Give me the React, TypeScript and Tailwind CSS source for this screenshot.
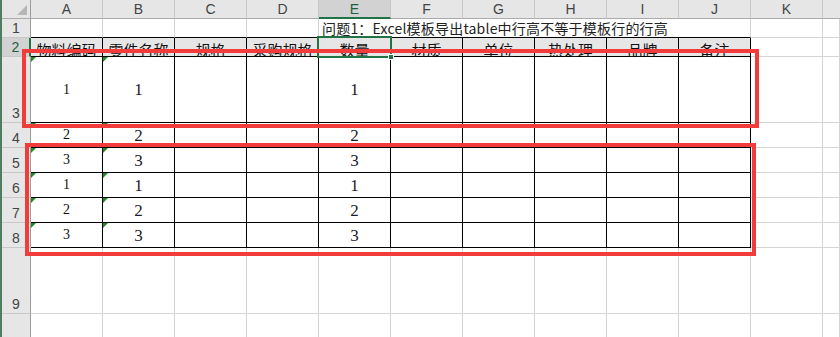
import React from 'react';

const COLS = ['A', 'B', 'C', 'D', 'E', 'F', 'G', 'H', 'I', 'J', 'K'];
const HEADERS = ['物料编码', '零件名称', '规格', '采购规格', '数量', '材质', '单位', '热处理', '品牌', '备注'];
const VALUES = ['1', '2', '3', '1', '2', '3'];
const ROW_NUMS = [2, 3, 4, 5, 6, 7, 8, 9, 10];

const cjk = "font-['Noto_Sans_CJK_SC',sans-serif]";

function Flag() {
  return (
    <svg className="absolute left-0 top-0" width="5" height="5" viewBox="0 0 5 5">
      <polygon points="0,0 5,0 0,5" fill="#1f8a1f" />
    </svg>
  );
}

function Cell({ row, col }: { row: number; col: number }) {
  // col: 0..10 => A..K, 11 => filler past K
  const inTable = col <= 9 && row >= 2 && row <= 8;
  const border = inTable ? 'border-r border-b border-black' : 'border-r border-b border-[#d4d4d4]';
  const bg = row === 2 && col <= 9 ? 'bg-[#e7e6e6]' : 'bg-white';

  if (row === 2 && col <= 9) {
    return (
      <div className={`flex items-end justify-center overflow-visible ${border} ${bg}`}>
        <span className={`-mb-[3px] whitespace-nowrap text-[15px] leading-[19px] text-[#111] ${cjk}`}>{HEADERS[col]}</span>
      </div>
    );
  }

  if (row >= 3 && row <= 8 && (col === 0 || col === 1 || col === 4)) {
    return (
      <div className={`relative flex items-center justify-center ${border} ${bg}`}>
        {col <= 1 && <Flag />}
        <span
          className={
            col === 0
              ? "font-['Liberation_Serif',serif] text-[14px] leading-none text-[#111]"
              : "font-['Liberation_Serif',serif] text-[17px] leading-none text-[#1b1b2e]"
          }
        >
          {VALUES[row - 3]}
        </span>
      </div>
    );
  }

  return <div className={`${border} ${bg}`} />;
}

function RowHeader({ r }: { r: number }) {
  const sel = r === 2;
  return (
    <div
      className={
        sel
          ? "flex items-end justify-center border-r-2 border-b border-r-[#217346] border-b-[#c8c8c8] bg-[#d2d2d2] pb-[1px] font-['Liberation_Sans',sans-serif] text-[14px] leading-[16px] text-[#1e5e3b]"
          : "flex items-end justify-center border-r border-b border-r-[#9c9c9c] border-b-[#c8c8c8] bg-[#e6e6e6] pb-[1px] font-['Liberation_Sans',sans-serif] text-[14px] leading-[16px] text-[#444]"
      }
    >
      {/* row 10 runs past the bottom of the window, its number is not visible */}
      {r < 10 ? r : null}
    </div>
  );
}

export default function App() {
  return (
    <div className="relative h-[337px] w-[840px] overflow-hidden bg-white">
      <div className="grid border-l-2 border-l-[#4f7d60] grid-cols-[29px_repeat(11,72px)_1fr] grid-rows-[19px_19px_19px_66px_25px_25px_25px_25px_25px_66px_40px]">
        {/* corner */}
        <div className="flex items-end justify-end border-r border-b border-r-[#9c9c9c] border-b-[#ababab] bg-[#e6e6e6] p-[3px]">
          <svg width="10" height="10" viewBox="0 0 10 10">
            <polygon points="10,0 10,10 0,10" fill="#b6b6b6" />
          </svg>
        </div>
        {/* column headers */}
        {COLS.map((c, i) => (
          <div
            key={c}
            className={
              i === 4
                ? "flex items-center justify-center border-r border-b-2 border-r-[#c8c8c8] border-b-[#217346] bg-[#d2d2d2] pt-[1px] font-['Liberation_Sans',sans-serif] text-[14px] text-[#1e5e3b]"
                : "flex items-center justify-center border-r border-b border-r-[#c8c8c8] border-b-[#ababab] bg-[#e6e6e6] font-['Liberation_Sans',sans-serif] text-[14px] text-[#444]"
            }
          >
            {c}
          </div>
        ))}
        <div className="border-b border-b-[#ababab] bg-[#e6e6e6]" />

        {/* row 1: title overflows from E1 to J1 */}
        <RowHeader r={1} />
        {[0, 1, 2, 3].map(c => (
          <div key={c} className="border-r border-b border-r-[#d4d4d4] border-b-black bg-white" />
        ))}
        <div className="col-span-6 flex items-end overflow-visible border-r border-b border-r-[#d4d4d4] border-b-black bg-white pl-[3px]">
          <span className={`whitespace-nowrap text-[14px] leading-[17px] tracking-[0.2px] text-[#222] ${cjk}`}>
            问题1：Excel模板导出table中行高不等于模板行的行高
          </span>
        </div>
        <Cell row={1} col={10} />
        <Cell row={1} col={11} />

        {/* rows 2..10 */}
        {ROW_NUMS.map(r => (
          <React.Fragment key={r}>
            <RowHeader r={r} />
            {Array.from({ length: 12 }, (_, c) => (
              <Cell key={c} row={r} col={c} />
            ))}
          </React.Fragment>
        ))}
      </div>

      {/* selected cell E2 */}
      <div className="absolute left-[317px] top-[36px] h-[22px] w-[75px] border-2 border-[#217346]">
        <div className="absolute right-[-4px] bottom-[-4px] h-[6px] w-[6px] border border-white bg-[#217346]" />
      </div>

      {/* red annotation boxes */}
      <div className="absolute left-[22px] top-[49px] h-[79px] w-[737px] border-[4px] border-[#f23c3c]" />
      <div className="absolute left-[25px] top-[143px] h-[113px] w-[731px] border-[4px] border-[#f23c3c]" />
    </div>
  );
}
